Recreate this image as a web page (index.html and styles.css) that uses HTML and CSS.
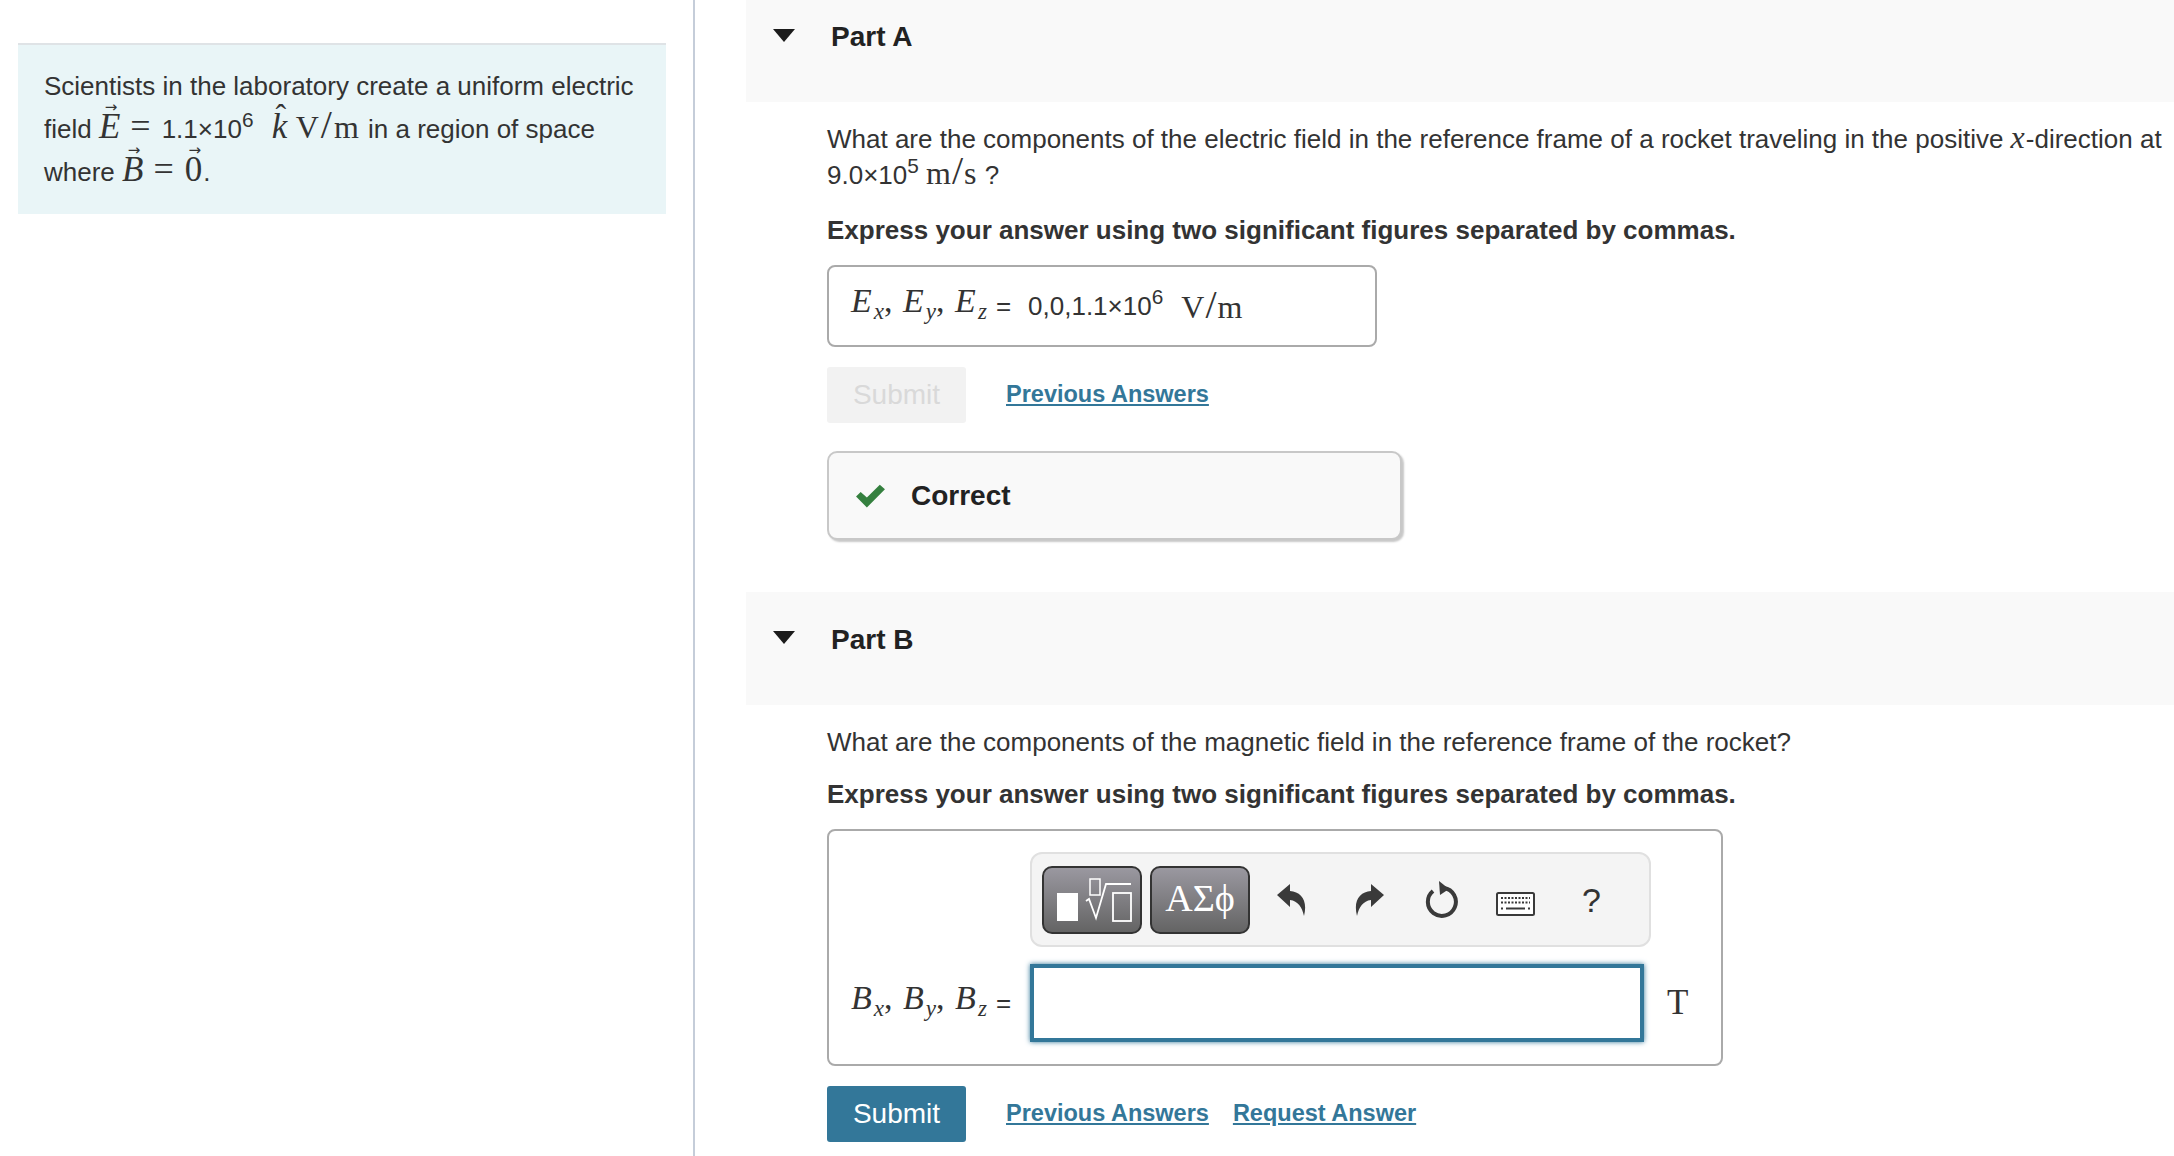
FILE: index.html
```html
<!DOCTYPE html>
<html lang="en">
<head>
  <meta charset="UTF-8">
  <title>Part A</title>
  <link rel="stylesheet" href="styles.css">
</head>
<body>
<div class="page">
  <aside class="sidebar">
    <div class="intro">
      <p>Scientists in the laboratory create a uniform electric field <span class="math"><span class="vec"><i>E</i></span><span class="op">=</span></span>1.1×10<sup>6</sup> <span class="math unit"><span class="vec hat"><i>k</i></span> V<span class="slash">/</span>m</span> in a region of space where <span class="math"><span class="vec"><i>B</i></span><span class="op">=</span><span class="vec">0</span></span>.</p>
    </div>
  </aside>

  <main class="parts">
    <section class="part">
      <header class="part-head">
        <span class="caret"></span>
        <h2>Part A</h2>
      </header>
      <div class="part-body">
        <p class="question">What are the components of the electric field in the reference frame of a rocket traveling in the positive <span class="math"><i>x</i></span>-direction at 9.0×10<sup>5</sup> <span class="math">m<span class="slash">/</span>s</span> ?</p>
        <p class="hint">Express your answer using two significant figures separated by commas.</p>
        <div class="answer-box answer-done">
          <span class="math label"><i>E<sub>x</sub></i>, <i>E<sub>y</sub></i>, <i>E<sub>z</sub></i></span>
          <span class="equals">=</span>
          <span class="given">0,0,1.1×10<sup>6</sup></span>
          <span class="math done-unit">V<span class="slash">/</span>m</span>
        </div>
        <div class="actions">
          <button class="submit" type="button" disabled>Submit</button>
          <a href="#">Previous Answers</a>
        </div>
        <div class="feedback">
          <svg class="check" viewBox="0 0 30 24" width="31" height="25"><path d="M1 13 L5.500 8.500 L11.500 14 L24 1.500 L29 6 L11.500 23.500 Z" fill="#35803f"/></svg>
          <strong>Correct</strong>
        </div>
      </div>
    </section>

    <section class="part part-b">
      <header class="part-head">
        <span class="caret"></span>
        <h2>Part B</h2>
      </header>
      <div class="part-body">
        <p class="question">What are the components of the magnetic field in the reference frame of the rocket?</p>
        <p class="hint">Express your answer using two significant figures separated by commas.</p>
        <div class="answer-box answer-open">
          <div class="toolbar">
            <button class="tool" type="button">
              <svg viewBox="0 0 100 68" width="100" height="68">
                <rect x="15" y="27" width="21" height="28" fill="#fff"/>
                <rect x="48" y="13" width="10" height="16" fill="none" stroke="#fff" stroke-width="1.500"/>
                <path d="M44 35 L47 33 L54 52 L64 18 L89 18" fill="none" stroke="#fff" stroke-width="1.800"/>
                <rect x="71" y="27" width="18" height="28" fill="none" stroke="#fff" stroke-width="1.800"/>
              </svg>
            </button>
            <button class="tool tool-text" type="button">ΑΣϕ</button>
            <svg class="icon icon-undo" viewBox="0 0 30 32" width="30" height="32"><path d="M0 11 L13 0 L13 7 C24 8 31 16 27 32 C25 23 21 17 13 16 L13 23 Z" fill="#3a3a3a"/></svg>
            <svg class="icon icon-redo" viewBox="0 0 30 32" width="30" height="32"><path d="M30 11 L17 0 L17 7 C6 8 -1 16 3 32 C5 23 9 17 17 16 L17 23 Z" fill="#3a3a3a"/></svg>
            <svg class="icon icon-reset" viewBox="0 0 34 38" width="34" height="38"><path d="M20 7 A14 14 0 1 1 9 10" fill="none" stroke="#3a3a3a" stroke-width="4"/><path d="M15 0 L25 8 L16 14 Z" fill="#3a3a3a"/></svg>
            <svg class="icon icon-keys" viewBox="0 0 39 24" width="39" height="24">
              <rect x="1" y="1" width="37" height="22" rx="1.500" fill="#fff" stroke="#3a3a3a" stroke-width="2"/>
              <path d="M5 6 H34 M5 10.500 H34" stroke="#3a3a3a" stroke-width="2" stroke-dasharray="2 1.500"/>
              <path d="M10 16.500 H29 M5 16.500 H7 M32 16.500 H34" stroke="#3a3a3a" stroke-width="2"/>
            </svg>
            <span class="icon-help">?</span>
          </div>
          <div class="entry">
            <span class="math label"><i>B<sub>x</sub></i>, <i>B<sub>y</sub></i>, <i>B<sub>z</sub></i></span>
            <span class="equals">=</span>
            <span class="input"></span>
            <span class="math entry-unit">T</span>
          </div>
        </div>
        <div class="actions">
          <button class="submit submit-on" type="button">Submit</button>
          <a href="#">Previous Answers</a>
          <a href="#">Request Answer</a>
        </div>
      </div>
    </section>
  </main>
</div>
</body>
</html>
```

FILE: styles.css
```css
* {
  box-sizing: border-box;
}

html,
body {
  margin: 0;
  height: 100%;
  overflow: hidden;
}

body {
  background: #fff;
  color: #333;
  font-family: "Liberation Sans", Arial, sans-serif;
  font-size: 26px;
  line-height: 36px;
}

p {
  margin: 0;
}

sup {
  font-size: 0.8em;
  line-height: 0;
  vertical-align: 0.55em;
}

.page {
  display: grid;
  grid-template-columns: 695px 1fr;
  height: 1156px;
}

.sidebar {
  border-right: 2px solid #c5cdd9;
  padding: 43px 27px 0 18px;
}

.intro {
  background: #e9f5f7;
  border-top: 2px solid #dfe3e6;
  height: 171px;
  padding: 20px 26px 0;
}

.intro p {
  line-height: 43px;
}

.intro sup {
  margin-right: 11px;
}

.math {
  font-family: "Liberation Serif", "Times New Roman", serif;
  font-size: 32px;
  letter-spacing: 1px;
  line-height: 0;
}

.math sub {
  font-size: 0.68em;
  letter-spacing: 0;
  line-height: 0;
  margin-left: 1px;
}

.unit {
  letter-spacing: 2px;
}

.slash {
  font-size: 1.25em;
  font-weight: 400;
  line-height: 0;
}

.op {
  font-size: 36px;
  margin: 0 10px 0 9px;
}

.vec {
  display: inline-block;
  font-size: 35px;
  line-height: 0;
  position: relative;
}

.vec::before {
  color: #333;
  content: "→";
  font-family: "DejaVu Sans", sans-serif;
  font-size: 15px;
  left: 50%;
  line-height: 1;
  position: absolute;
  top: -27px;
  transform: translateX(-40%);
}

.vec.hat {
  margin-right: -3px;
}

.vec.hat::before {
  content: "ˆ";
  font-family: "Liberation Serif", serif;
  font-size: 32px;
  top: -28px;
}

.parts {
  min-width: 0;
  padding-left: 51px;
}

.part-head {
  align-items: flex-start;
  background: #f9f9f9;
  display: flex;
  height: 102px;
  padding: 18px 0 0 27px;
}

.part-b {
  margin-top: 52px;
}

.part-b .part-head {
  height: 113px;
  padding-top: 28px;
}

.caret {
  border-left: 11px solid transparent;
  border-right: 11px solid transparent;
  border-top: 13px solid #1c1c1c;
  height: 0;
  margin-top: 11px;
  width: 0;
}

.part-head h2 {
  color: #222;
  font-size: 28px;
  font-weight: 700;
  line-height: 37px;
  margin: 0 0 0 36px;
}

.part-b h2 {
  margin-top: 1px;
}

.part-body {
  padding: 19px 0 0 81px;
}

.question {
  line-height: 36px;
}

.hint {
  font-weight: 700;
  margin-top: 19px;
}

.part-b .part-body {
  padding-top: 19px;
}

.part-b .hint {
  margin-top: 16px;
}

.answer-box {
  border: 2px solid #aaa;
  border-radius: 8px;
  margin-top: 17px;
}

.answer-done {
  align-items: center;
  display: flex;
  height: 82px;
  padding-left: 22px;
  width: 550px;
}

.label {
  font-size: 34px;
  white-space: nowrap;
}

.equals {
  margin: 0 17px 0 9px;
}

.given {
  white-space: nowrap;
}

.done-unit {
  margin-left: 18px;
}

.actions {
  align-items: center;
  display: flex;
  margin-top: 20px;
}

.actions a {
  color: #337799;
  font-size: 23.500px;
  font-weight: 700;
  margin-bottom: 2px;
  margin-right: 24px;
  text-decoration: underline;
}

.submit {
  background: #f2f2f2;
  border: 0;
  border-radius: 3px;
  color: #d9d9d9;
  font: inherit;
  font-size: 28px;
  height: 56px;
  margin-right: 40px;
  padding: 0;
  width: 139px;
}

.submit-on {
  background: #337799;
  color: #fff;
}

.feedback {
  align-items: center;
  background: #f9f9f9;
  border: 2px solid #c8c8c8;
  border-radius: 10px;
  box-shadow: 2px 2px 2px #c8c8c8;
  display: flex;
  height: 89px;
  margin-top: 28px;
  padding-left: 26px;
  width: 575px;
}

.feedback strong {
  color: #222;
  font-size: 28px;
  margin-left: 25px;
}

.answer-open {
  height: 237px;
  margin-top: 17px;
  padding: 21px 0 0 22px;
  width: 896px;
}

.toolbar {
  align-items: center;
  background: #f4f4f4;
  border: 2px solid #e0e0e0;
  border-radius: 12px;
  display: flex;
  height: 95px;
  margin-left: 179px;
  padding-left: 10px;
  width: 621px;
}

.tool {
  background: linear-gradient(#9a98a0, #646464);
  border: 2px solid #333;
  border-radius: 10px;
  color: #fff;
  height: 68px;
  margin-right: 8px;
  padding: 0;
  width: 100px;
}

.tool svg {
  display: block;
  margin: -2px;
}

.tool-text {
  font-family: "Liberation Serif", serif;
  font-size: 38px;
  line-height: 1;
  padding-bottom: 4px;
}

.icon {
  flex: none;
}

.icon-undo {
  margin-left: 19px;
}

.icon-redo {
  margin-left: 47px;
}

.icon-reset {
  margin-left: 40px;
}

.icon-keys {
  margin-left: 38px;
  margin-top: 8px;
}

.icon-help {
  font-size: 34px;
  margin-left: 47px;
}

.entry {
  align-items: center;
  display: flex;
  margin-top: 17px;
}

.entry .equals {
  margin: 0 19px 0 9px;
}

.input {
  background: #fff;
  border: 4px solid #337799;
  box-shadow: 0 0 5px #337799;
  height: 78px;
  width: 614px;
}

.entry-unit {
  font-size: 35px;
  margin-left: 23px;
}
```
